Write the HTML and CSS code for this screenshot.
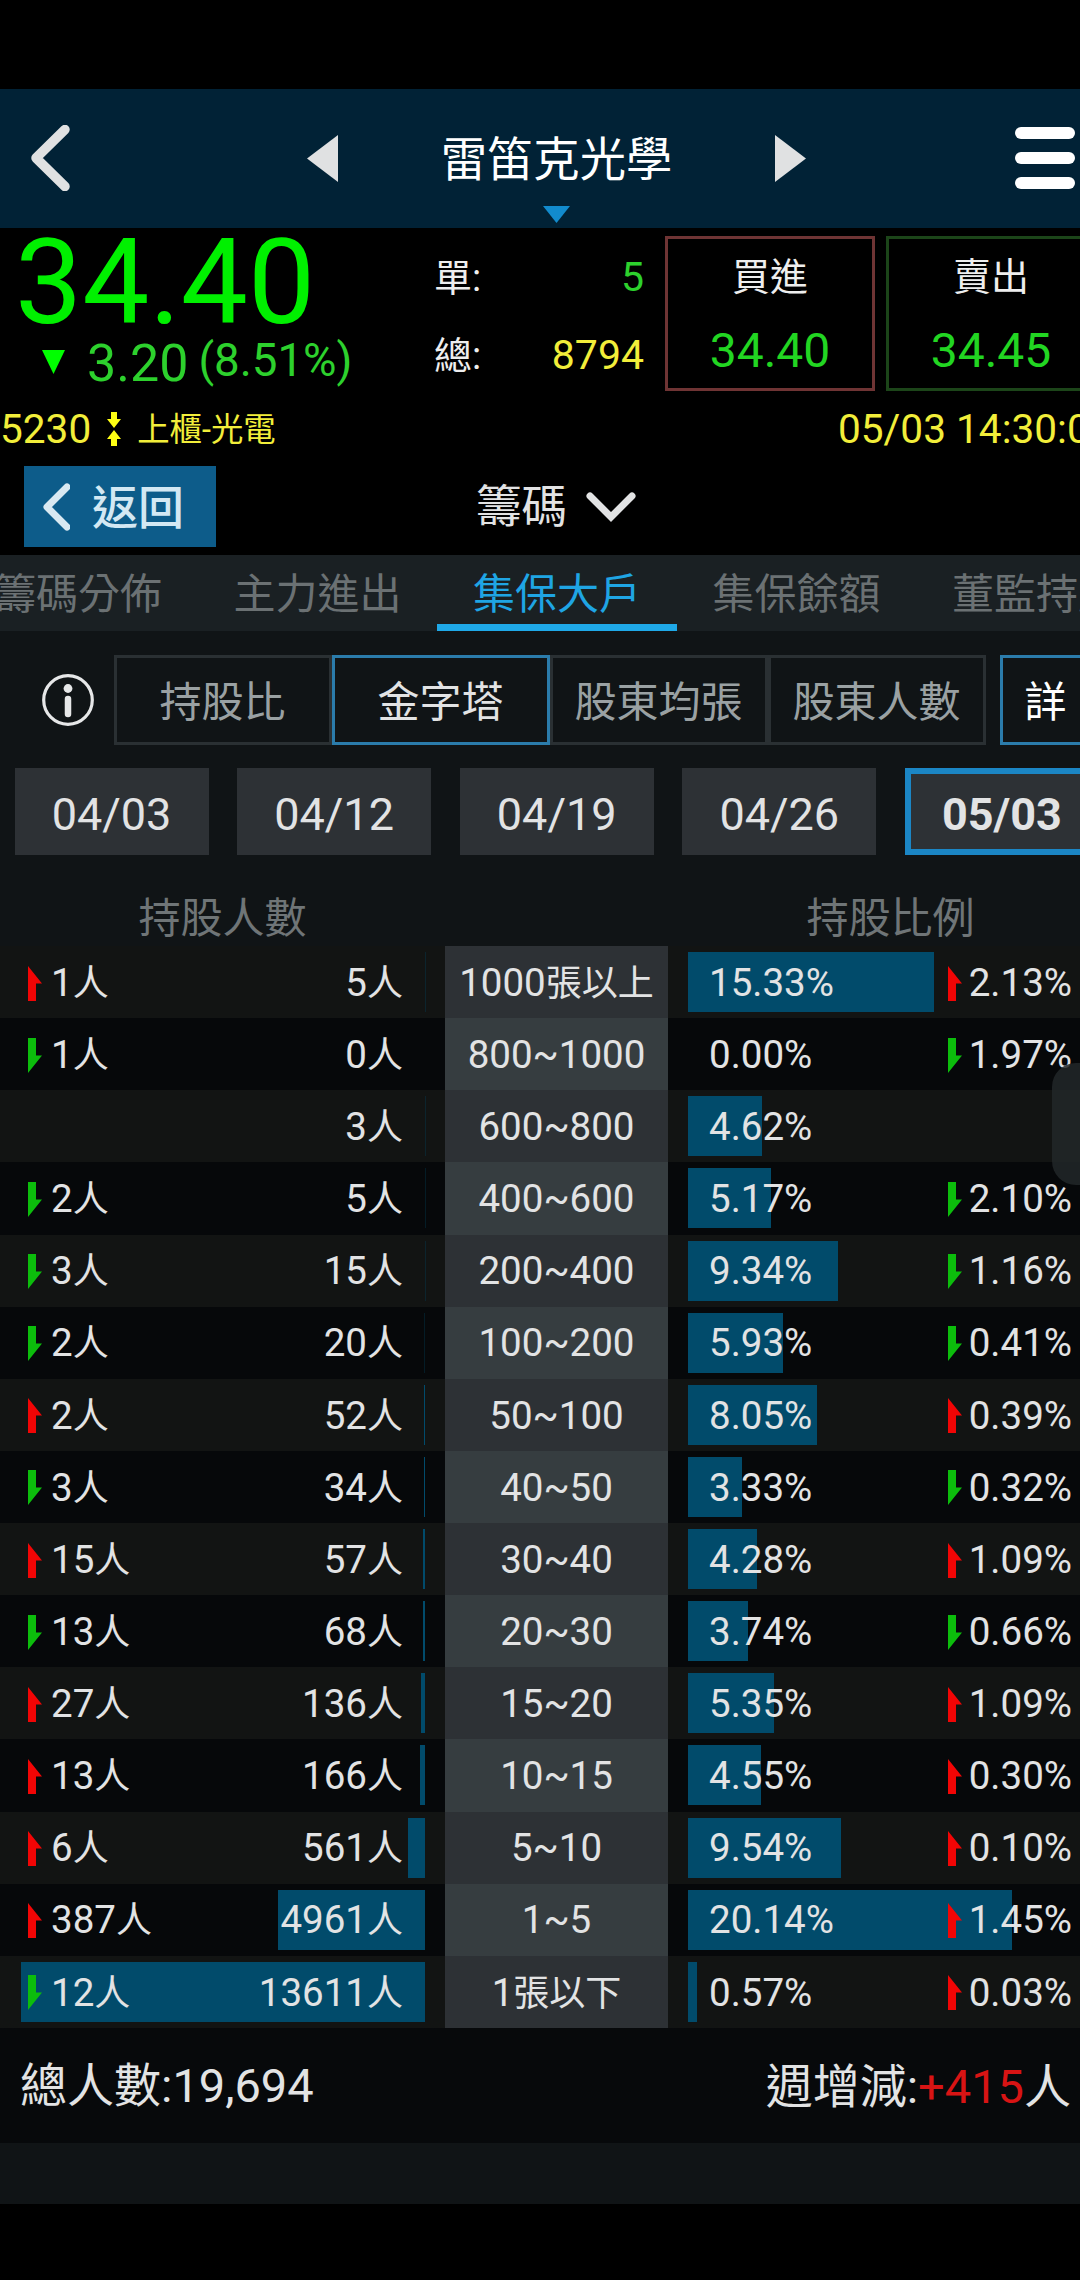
FILE: index.html
```html
<!DOCTYPE html>
<html lang="zh-Hant">
<head>
    <meta charset="UTF-8">
    <meta name="viewport" content="width=device-width, initial-scale=1.0">
    <title>雷笛克光學 - 集保大戶</title>
    <link rel="stylesheet" href="styles.css">
</head>
<body>
    <header class="header">
        <svg class="back-icon" viewBox="0 0 40 66"><path d="M34 4.5 L5 33 L34 61.5"/></svg>
        <svg class="prev-icon" viewBox="0 0 31 47"><path d="M31 0 V47 L0 23.5 Z"/></svg>
        <div class="stock">
            <h1>雷笛克光學</h1>
            <svg class="drop-icon" viewBox="0 0 27 17"><path d="M0 0 H27 L13.5 17 Z"/></svg>
        </div>
        <svg class="next-icon" viewBox="0 0 31 47"><path d="M0 0 V47 L31 23.5 Z"/></svg>
        <div class="menu"><span></span><span></span><span></span></div>
    </header>

    <section class="quote">
        <div class="price">
            <div class="price-now">34.40</div>
            <div class="price-change">
                <svg viewBox="0 0 23 24"><path d="M0 0 H23 L11.5 24 Z"/></svg>
                <span class="diff">3.20</span>
                <span class="percent">(8.51%)</span>
            </div>
        </div>
        <div class="volume">
            <div><span>單:</span><span class="green">5</span></div>
            <div><span>總:</span><span class="yellow">8794</span></div>
        </div>
        <div class="deal buy"><span>買進</span><b>34.40</b></div>
        <div class="deal sell"><span>賣出</span><b>34.45</b></div>
    </section>

    <div class="info-line">
        <span>5230</span>
        <svg viewBox="0 0 14 34"><path d="M4 0 H10 V7 H14 L7 16 L0 7 H4 Z M7 18 L14 27 H10 V34 H4 V27 H0 Z"/></svg>
        <span class="market">上櫃-光電</span>
        <span class="time">05/03 14:30:00</span>
    </div>

    <div class="toolbar">
        <div class="back-button">
            <svg viewBox="0 0 27 48"><path d="M24 4 L4 24 L24 44"/></svg>
            <span>返回</span>
        </div>
        <div class="category">
            <span>籌碼</span>
            <svg viewBox="0 0 50 30"><path d="M4 4 L25 25 L46 4"/></svg>
        </div>
    </div>

    <nav class="tabs">
        <div class="tab">籌碼分佈</div>
        <div class="tab">主力進出</div>
        <div class="tab active">集保大戶</div>
        <div class="tab">集保餘額</div>
        <div class="tab">董監持股</div>
    </nav>

    <div class="segments">
        <svg class="info-icon" viewBox="0 0 52 52"><circle cx="26" cy="26" r="24.3"/><circle class="dot" cx="26" cy="14.5" r="4.4"/><path d="M26 25 V40"/></svg>
        <div class="segment">持股比</div>
        <div class="segment active">金字塔</div>
        <div class="segment">股東均張</div>
        <div class="segment">股東人數</div>
        <div class="detail">詳</div>
    </div>

    <div class="dates">
        <div class="date">04/03</div>
        <div class="date">04/12</div>
        <div class="date">04/19</div>
        <div class="date">04/26</div>
        <div class="date active">05/03</div>
    </div>

    <div class="table-head">
        <div>持股人數</div>
        <div></div>
        <div>持股比例</div>
    </div>
    <div class="table" id="table"></div>

    <footer class="total">
        <span>總人數:19,694</span>
        <span class="week">週增減:<em>+415</em>人</span>
    </footer>
    <div class="bottom"></div>

    <div class="side-handle"></div>

    <script src="script.js"></script>
</body>
</html>
```
FILE: styles.css
```css
* {
    box-sizing: border-box;
}

body {
    margin: 0;
    padding-top: 89px;
    width: 1080px;
    height: 2280px;
    overflow: hidden;
    position: relative;
    background: #000;
    color: #e2e3e4;
    font-family: Roboto, "Noto Sans CJK TC", sans-serif;
    line-height: 1;
}

svg {
    display: block;
    flex: none;
}

.header {
    display: flex;
    height: 139px;
    padding: 0 5px 0 31px;
    background: #012236;
}

.back-icon {
    width: 40px;
    height: 66px;
    margin-top: 36px;
    fill: none;
    stroke: #e0e1e2;
    stroke-width: 9.5;
    stroke-linecap: round;
    stroke-linejoin: round;
}

.prev-icon,
.next-icon {
    width: 31px;
    height: 47px;
    margin-top: 46px;
    fill: #e0e1e2;
}

.prev-icon {
    margin-left: 236px;
}

.stock {
    width: 437px;
    display: flex;
    flex-direction: column;
    align-items: center;
}

.stock h1 {
    margin: 48px 0 23px;
    font-size: 46.3px;
    line-height: 46px;
    font-weight: 400;
    color: #fff;
}

.drop-icon {
    width: 27px;
    height: 17px;
    fill: #128bcd;
}

.menu {
    display: flex;
    flex-direction: column;
    gap: 13px;
    width: 60px;
    margin-top: 38px;
    margin-left: auto;
}

.menu span {
    height: 12px;
    border-radius: 6px;
    background: #fff;
}

.quote {
    display: flex;
    height: 172px;
    padding-top: 8px;
    overflow: hidden;
}

.price {
    width: 436px;
    flex: none;
}

.price-now {
    height: 96px;
    padding-left: 15px;
    font-size: 119.5px;
    line-height: 92px;
    color: #00f000;
}

.price-change {
    display: flex;
    align-items: center;
    height: 60px;
    padding-left: 42px;
    color: #2dd12d;
}

.price-change svg {
    width: 23px;
    height: 24px;
    fill: #00ff00;
    margin-right: 22px;
}

.diff {
    font-size: 52px;
    margin-right: 10px;
    padding-top: 4px;
}

.percent {
    font-size: 45.7px;
    padding-bottom: 2px;
}

.volume {
    width: 209px;
    margin-right: 20px;
    padding-top: 10px;
    flex: none;
    font-size: 38px;
    color: #eee;
}

.volume div {
    display: flex;
    justify-content: space-between;
    align-items: center;
    height: 78px;
    margin-left: -2px;
    padding-bottom: 15px;
}

.volume .green,
.volume .yellow {
    font-size: 41px;
    margin-right: 1px;
}

.green {
    color: #2dd12d;
}

.yellow {
    color: #f2ee3a;
}

.deal {
    display: flex;
    flex-direction: column;
    align-items: center;
    width: 210px;
    height: 155px;
    margin-right: 11px;
    flex: none;
    border: 3px solid #6f3434;
    font-size: 38px;
    color: #eee;
}

.deal.sell {
    border-color: #1c4519;
}

.deal span {
    height: 38px;
    margin-top: 19px;
    line-height: 38px;
}

.deal b {
    margin-top: 31px;
    font-size: 48px;
    font-weight: 400;
    color: #22d622;
}

.info-line {
    display: flex;
    align-items: center;
    height: 58px;
    overflow: hidden;
    white-space: nowrap;
    font-size: 40.6px;
    color: #f2ee3a;
}

.info-line svg {
    width: 14px;
    height: 34px;
    margin: 0 16px 0 16px;
    fill: #ffff14;
}

.info-line .market {
    padding-top: 2px;
    font-size: 32.4px;
}

.info-line .time {
    flex: none;
    width: 242px;
    margin-left: auto;
}

.toolbar {
    display: flex;
    height: 97px;
    padding: 8px 0 0 24px;
}

.back-button {
    display: flex;
    align-items: center;
    width: 192px;
    height: 81px;
    padding-left: 19px;
    background: #0d5c8a;
    font-size: 46px;
    font-weight: 500;
    color: #d3e8f3;
}

.back-button span,
.category span {
    padding-top: 3px;
}

.back-button svg {
    width: 27px;
    height: 48px;
    margin-right: 22px;
    fill: none;
    stroke: #d9e9f2;
    stroke-width: 7;
    stroke-linecap: round;
    stroke-linejoin: round;
}

.category {
    display: flex;
    align-items: center;
    height: 81px;
    margin-left: 260px;
    font-size: 45.5px;
}

.category svg {
    width: 50px;
    height: 30px;
    margin-left: 19px;
    fill: none;
    stroke: #e2e3e4;
    stroke-width: 7;
    stroke-linecap: round;
}

.tabs {
    display: flex;
    justify-content: center;
    height: 76px;
    margin-left: -42px;
    width: 1198px;
    background: #1a2023;
}

.tab {
    width: 239.5px;
    height: 76px;
    flex: none;
    text-align: center;
    font-size: 42px;
    line-height: 79px;
    color: #6b7173;
}

.tab.active {
    color: #1fa5e4;
    border-bottom: 7px solid #1fa9e8;
}

.segments {
    display: flex;
    align-items: center;
    height: 137px;
    padding: 11px 0 10px 42px;
    overflow: hidden;
    background: #101416;
}

.info-icon {
    width: 52px;
    height: 52px;
    margin-right: 19.5px;
    fill: none;
    stroke: #e6e7e8;
    stroke-width: 3.2;
    stroke-linecap: round;
}

.info-icon path {
    stroke-width: 6.5;
}

.info-icon .dot {
    fill: #e6e7e8;
    stroke: none;
}

.segment,
.detail {
    width: 218px;
    height: 90px;
    flex: none;
    border: 3px solid #2a3033;
    text-align: center;
    font-size: 42px;
    line-height: 89px;
    color: #9aa1a3;
}

.segment.active {
    border-color: #2b7cab;
    color: #e2e3e4;
}

.detail {
    margin-left: 14px;
    padding-left: 22px;
    text-align: left;
    border-color: #2b7cab;
    color: #fff;
}

.dates {
    display: flex;
    gap: 28.6px;
    height: 87px;
    padding-left: 14.5px;
    overflow: hidden;
    background: #101416;
}

.date {
    width: 194px;
    height: 87px;
    flex: none;
    background: #2d3135;
    text-align: center;
    font-size: 45px;
    line-height: 94px;
}

.date.active {
    border: 6px solid #1b86c5;
    line-height: 82px;
    font-weight: 700;
}

.table-head {
    display: grid;
    grid-template-columns: 445px 223px 445px;
    height: 91px;
    background: #101416;
    text-align: center;
    font-size: 42px;
    line-height: 127px;
    overflow: hidden;
    color: #6f7577;
}

/* 1082px / 15 rows */
.row {
    display: grid;
    grid-template-columns: 445px 223px 412px;
    height: 72.14px;
    background: #06080a;
    font-size: 38.5px;
}

.row:nth-child(odd) {
    background: #121413;
}

/* units are set a little smaller than the digits */
.row small {
    font-size: 36px;
}

.people,
.ratio {
    display: grid;
    align-items: center;
}

.people {
    padding: 0 20px;
}

.ratio {
    padding-left: 20px;
}

.bar {
    grid-area: 1 / 1;
    height: 60px;
    background: #014b6b;
}

.people .bar {
    justify-self: end;
}

.bar.thin {
    opacity: 0.3;
}

.values {
    grid-area: 1 / 1;
    display: flex;
    justify-content: space-between;
    align-items: center;
    padding-top: 2px;
}

.people .values {
    padding-left: 8px;
    padding-right: 22px;
}

.ratio .values {
    padding-left: 21px;
    padding-right: 8px;
}

.change {
    display: flex;
    align-items: center;
}

.change svg {
    width: 14px;
    height: 35px;
    margin-right: 9px;
}

.ratio .change svg {
    margin-right: 7px;
}

.up {
    fill: #f20505;
}

.down {
    fill: #0cbd0c;
}

.range {
    display: flex;
    align-items: center;
    justify-content: center;
    padding-top: 2px;
    background: #363d40;
}

.row:nth-child(odd) .range {
    background: #2d3135;
}

.total {
    display: flex;
    justify-content: space-between;
    align-items: center;
    height: 115px;
    padding: 0 9px 0 20px;
    background: #07090b;
    font-size: 47px;
}

.total .week {
    padding-top: 2px;
}

.total em {
    font-style: normal;
    color: #d81414;
}

.bottom {
    height: 61px;
    background: #101416;
}

/* floating panel handle at the screen edge */
.side-handle {
    position: absolute;
    top: 1063px;
    right: 0;
    width: 28px;
    height: 122px;
    border-radius: 24px 0 0 24px;
    background: rgba(34, 39, 41, 0.85);
}
```
FILE: script.js
```js
// [人數增減, 人數, 級距, 比例, 比例增減]
const rows = [
    [1, 5, "1000張以上", 15.33, 2.13],
    [-1, 0, "800~1000", 0, -1.97],
    [0, 3, "600~800", 4.62, 0],
    [-2, 5, "400~600", 5.17, -2.10],
    [-3, 15, "200~400", 9.34, -1.16],
    [-2, 20, "100~200", 5.93, -0.41],
    [2, 52, "50~100", 8.05, 0.39],
    [-3, 34, "40~50", 3.33, -0.32],
    [15, 57, "30~40", 4.28, 1.09],
    [-13, 68, "20~30", 3.74, -0.66],
    [27, 136, "15~20", 5.35, 1.09],
    [13, 166, "10~15", 4.55, 0.30],
    [6, 561, "5~10", 9.54, 0.10],
    [387, 4961, "1~5", 20.14, 1.45],
    [-12, 13611, "1張以下", 0.57, 0.03]
];

function change(value, text) {
    if (value === 0) return '<span></span>';
    const icon = value > 0
        ? '<svg class="up" viewBox="0 0 14 35"><path d="M0 0 L14 17.5 H8 V35 H0 Z"/></svg>'
        : '<svg class="down" viewBox="0 0 14 35"><path d="M0 0 H8 V17.5 H14 L0 35 Z"/></svg>';
    return `<span class="change">${icon}<span>${text}</span></span>`;
}

document.getElementById("table").innerHTML = rows.map(([diff, count, range, ratio, ratioDiff]) => `
    <div class="row">
        <div class="people">
            <div class="bar ${count < 30 ? "thin" : ""}" style="width: ${(count * 404 / 13611).toFixed(1)}px"></div>
            <div class="values">${change(diff, Math.abs(diff) + "<small>人</small>")}<span>${count}<small>人</small></span></div>
        </div>
        <div class="range"><span>${range.replace(/(張以.)/, "<small>$1</small>")}</span></div>
        <div class="ratio">
            <div class="bar" style="width: ${(ratio * 16.07).toFixed(1)}px"></div>
            <div class="values"><span>${ratio.toFixed(2)}%</span>${change(ratioDiff, Math.abs(ratioDiff).toFixed(2) + "%")}</div>
        </div>
    </div>`).join("");
```
